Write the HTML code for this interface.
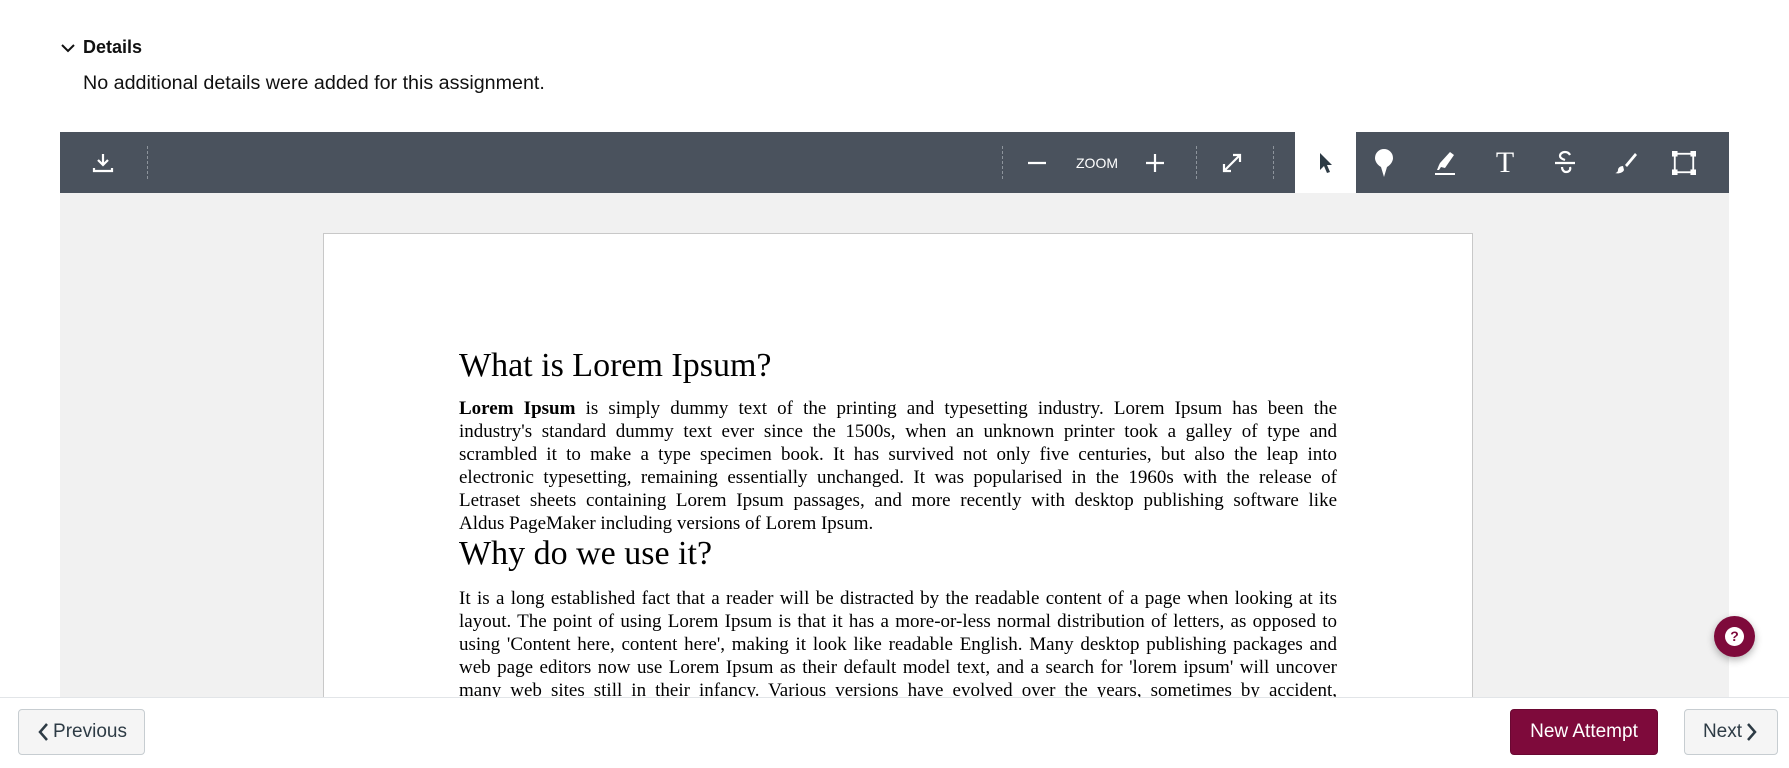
<!DOCTYPE html>
<html><head><meta charset="utf-8"><style>
*{margin:0;padding:0;box-sizing:border-box}
html,body{width:1789px;height:768px;overflow:hidden}
body{background:#fff;position:relative;font-family:"Liberation Sans",sans-serif;color:#2d3b45}
.abs{position:absolute}
#gray{left:60px;top:193px;width:1669px;height:505px;background:#f1f1f1;overflow:hidden}
#page{left:263px;top:40px;width:1150px;height:600px;background:#fff;border:1px solid #c8c8c8}
.tb{left:60px;top:132px;width:1669px;height:61px;background:#4a525d}
.sep{position:absolute;top:14px;height:33px;border-left:1px dashed #8d949c}
.ic{position:absolute;top:0;height:61px;display:flex;align-items:center;justify-content:center}
.doc{font-family:"Liberation Serif",serif;color:#000}
.ln{text-align:justify;text-align-last:justify;white-space:nowrap;height:23px;overflow:hidden}
.p{position:absolute;left:459px;width:878px;font-size:19px;line-height:23px}
.btn{position:absolute;top:709px;height:46px;border-radius:4px;font-size:19px;display:flex;align-items:center;justify-content:center}
</style></head><body>
<svg class="abs" style="left:60px;top:42px" width="16" height="12" viewBox="0 0 16 12"><path d="M2 3l6 6 6-6" fill="none" stroke="#111" stroke-width="2"/></svg>
<div class="abs" style="left:83px;top:37px;font-size:18px;font-weight:bold;color:#111">Details</div>
<div class="abs" style="left:83px;top:72px;font-size:19.7px;color:#111">No additional details were added for this assignment.</div>

<div id="gray" class="abs"><div id="page" class="abs"></div></div>

<div class="abs doc" style="left:459px;top:346px;font-size:34px;line-height:40px">What is Lorem Ipsum?</div>
<div class="p doc" style="top:397px">
<div class="ln"><b>Lorem Ipsum</b> is simply dummy text of the printing and typesetting industry. Lorem Ipsum has been the</div>
<div class="ln">industry's standard dummy text ever since the 1500s, when an unknown printer took a galley of type and</div>
<div class="ln">scrambled it to make a type specimen book. It has survived not only five centuries, but also the leap into</div>
<div class="ln">electronic typesetting, remaining essentially unchanged. It was popularised in the 1960s with the release of</div>
<div class="ln">Letraset sheets containing Lorem Ipsum passages, and more recently with desktop publishing software like</div>
<div style="height:23px;white-space:nowrap">Aldus PageMaker including versions of Lorem Ipsum.</div>
</div>
<div class="abs doc" style="left:459px;top:534px;font-size:34px;line-height:40px">Why do we use it?</div>
<div class="p doc" style="top:587px">
<div class="ln">It is a long established fact that a reader will be distracted by the readable content of a page when looking at its</div>
<div class="ln">layout. The point of using Lorem Ipsum is that it has a more-or-less normal distribution of letters, as opposed to</div>
<div class="ln">using 'Content here, content here', making it look like readable English. Many desktop publishing packages and</div>
<div class="ln">web page editors now use Lorem Ipsum as their default model text, and a search for 'lorem ipsum' will uncover</div>
<div class="ln">many web sites still in their infancy. Various versions have evolved over the years, sometimes by accident,</div>
</div>

<div class="abs tb">
 <div class="ic" style="left:28px;width:30px"><svg width="24" height="24" viewBox="0 0 24 24" fill="none" stroke="#fff" stroke-width="2.2"><path d="M12 3v11M7 9l5 5 5-5M3 17v3h18v-3"/></svg></div>
 <div class="sep" style="left:87px"></div>
 <div class="sep" style="left:942px"></div>
 <div class="ic" style="left:965px;width:24px"><svg width="20" height="20"><path d="M1 10h18" stroke="#fff" stroke-width="2.2"/></svg></div>
 <div class="ic" style="left:1007px;width:60px;color:#fff;font-size:14px">ZOOM</div>
 <div class="ic" style="left:1083px;width:24px"><svg width="20" height="20"><path d="M1 10h18M10 1v18" stroke="#fff" stroke-width="2.2"/></svg></div>
 <div class="sep" style="left:1136px"></div>
 <div class="ic" style="left:1160px;width:24px"><svg width="24" height="24" fill="none" stroke="#fff" stroke-width="2.2"><path d="M4 20L20 4M13 4h7v7M4 13v7h7"/></svg></div>
 <div class="sep" style="left:1213px"></div>
 <div class="ic" style="left:1235px;width:61px;background:#fff"><svg width="16" height="24" viewBox="0 0 16 24"><path d="M2 2v17l4-4 3 7 3-1-3-7h5z" fill="#2d3b45"/></svg></div>
 <div class="ic" style="left:1312px;width:24px"><svg width="20" height="30" viewBox="0 0 20 30"><path d="M10 29L7 19C2 16 1 12 1 10a9 9 0 0 1 18 0c0 2-1 6-6 9z" fill="#fff"/></svg></div>
 <div class="ic" style="left:1373px;width:24px"><svg width="24" height="26" viewBox="0 0 24 26"><path d="M17 2l4 3-9 13-4-1-2 3H4l2-5 1-2z" fill="#fff"/><path d="M2 24h20" stroke="#fff" stroke-width="2"/></svg></div>
 <div class="ic" style="left:1433px;width:24px;color:#fff;font-family:'Liberation Serif',serif;font-size:30px">T</div>
 <div class="ic" style="left:1493px;width:24px"><svg width="24" height="26" viewBox="0 0 24 26" fill="none" stroke="#fff" stroke-width="2.2"><path d="M17 5c-1-2-3-3-5-3-3 0-5 2-5 4s2 3 5 4M2 13h20M9 17c0 3 2 5 4 5 3 0 5-2 4-5"/></svg></div>
 <div class="ic" style="left:1553px;width:24px"><svg width="24" height="24" viewBox="0 0 24 24"><path d="M22 2l-10 12 2 2 10-12z M10 15c-3 0-5 2-5 4 0 2-2 3-3 3 3 1 8 0 9-3z" fill="#fff"/></svg></div>
 <div class="ic" style="left:1612px;width:24px"><svg width="26" height="26" viewBox="0 0 26 26"><rect x="3" y="3" width="20" height="20" fill="none" stroke="#fff" stroke-width="2"/><g fill="#fff"><rect x="0" y="0" width="6" height="6"/><rect x="20" y="0" width="6" height="6"/><rect x="0" y="20" width="6" height="6"/><rect x="20" y="20" width="6" height="6"/></g></svg></div>
</div>

<div class="abs" style="left:0;top:697px;width:1789px;height:71px;background:#fff;border-top:1px solid #e2e5e8"></div>
<div class="btn" style="left:18px;width:127px;background:#f5f5f5;border:1px solid #c7cdd1;color:#2d3b45"><svg width="14" height="20" style="margin-right:3px"><path d="M11 2L4 10l7 8" fill="none" stroke="#2d3b45" stroke-width="2.5"/></svg>Previous</div>
<div class="btn" style="left:1510px;width:148px;background:#7e0a3b;color:#fff;border:1px solid #6a0832">New Attempt</div>
<div class="btn" style="left:1684px;width:94px;background:#f5f5f5;border:1px solid #c7cdd1;color:#2d3b45">Next<svg width="14" height="20" style="margin-left:3px"><path d="M3 2l7 8-7 8" fill="none" stroke="#2d3b45" stroke-width="2.5"/></svg></div>

<div class="abs" style="left:1714px;top:616px;width:41px;height:41px;border-radius:50%;background:#7e0a3b;box-shadow:0 3px 8px rgba(0,0,0,.3);display:flex;align-items:center;justify-content:center"><div style="width:19px;height:19px;border-radius:50%;background:#fff;color:#7e0a3b;font-weight:bold;font-size:14px;line-height:19px;text-align:center">?</div></div>
</body></html>
